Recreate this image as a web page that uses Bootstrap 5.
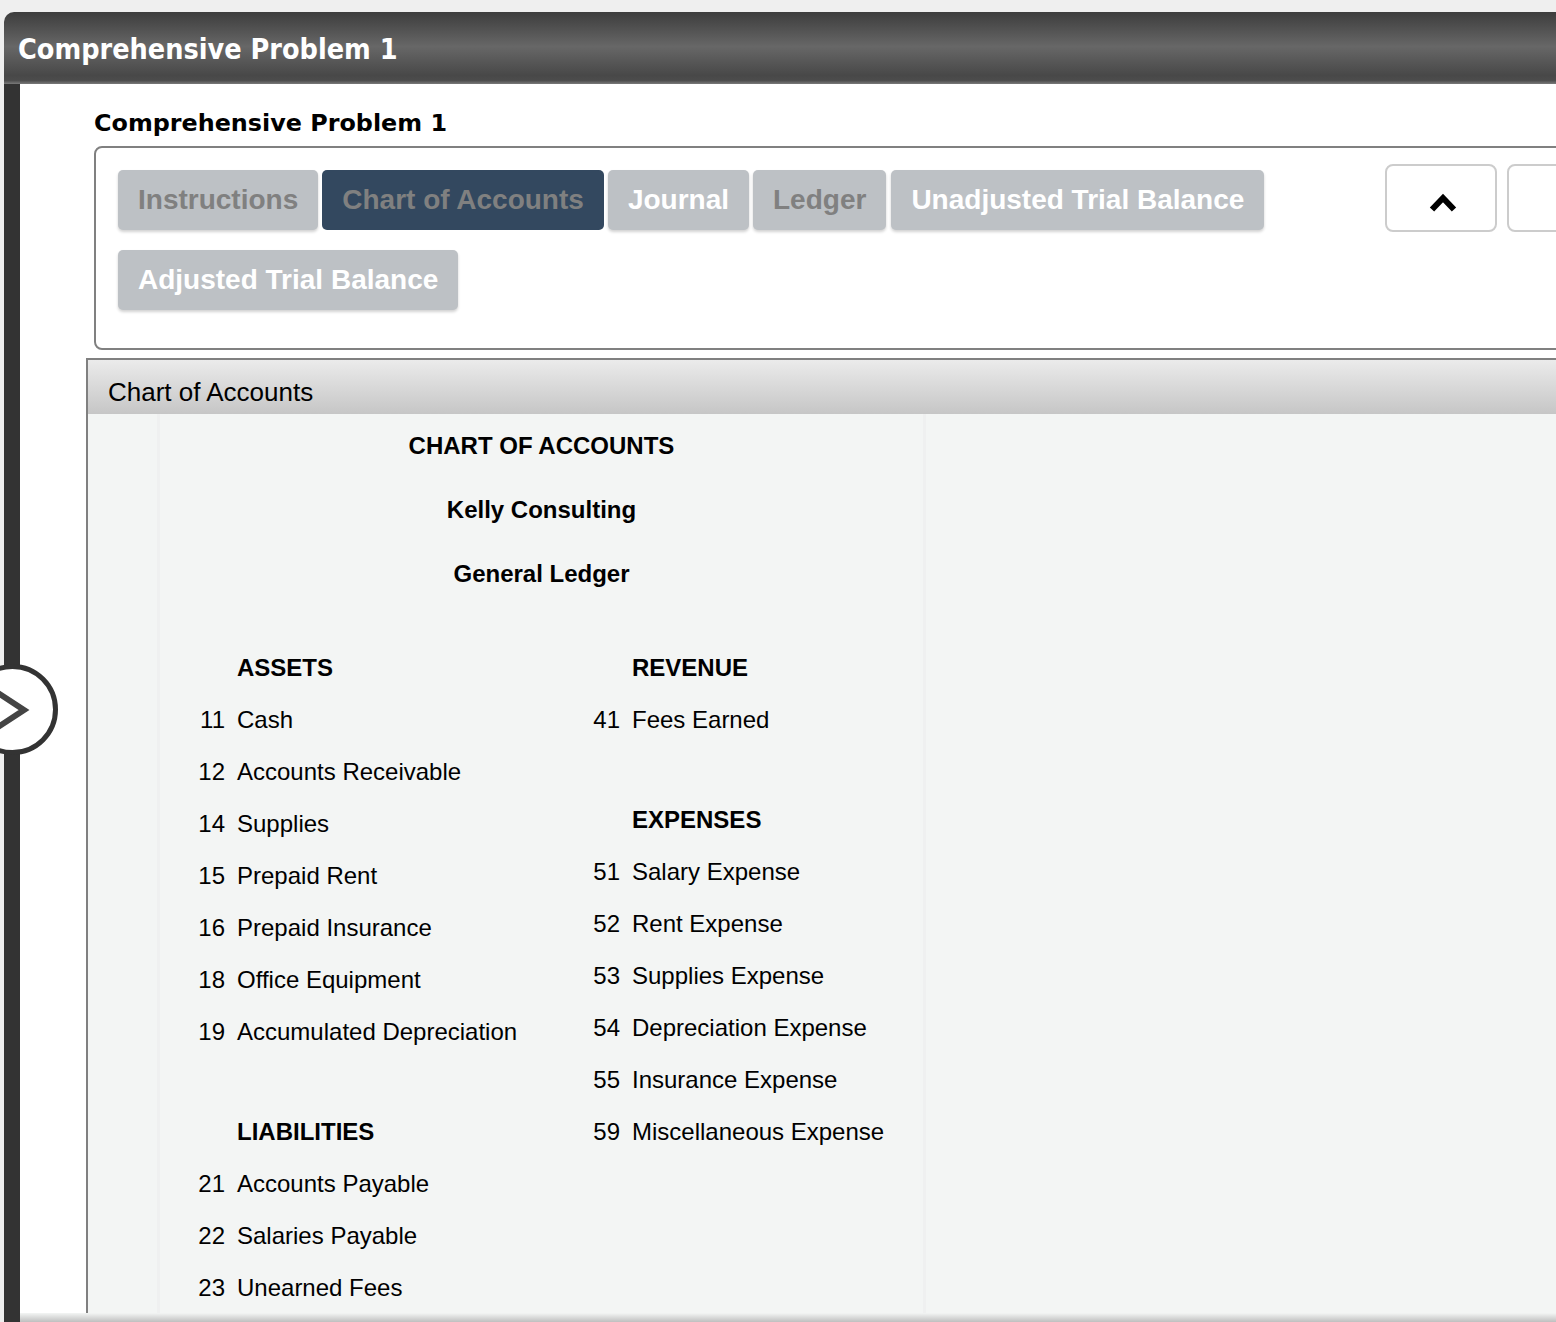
<!DOCTYPE html>
<html lang="en">
<head>
<meta charset="utf-8">
<title>Comprehensive Problem 1</title>
<link href="https://cdn.jsdelivr.net/npm/bootstrap@5.3.0/dist/css/bootstrap.min.css" rel="stylesheet">
<style>
html,body{height:100%}
body{background:#efefef;overflow:hidden;font-family:"Liberation Sans",Arial,sans-serif;color:#000}
.app-win{margin:12px 0 0 4px;width:1720px;height:1310px}
.app-head{height:72px;border-radius:10px 0 0 0;padding:0 14px;background:linear-gradient(#3d3d3d 0,#676767 48%,#484848 88%,#4c4c4c 95%,#7a7a7a 100%);color:#fff;font:700 28.5px/75px "DejaVu Sans Condensed","DejaVu Sans",Verdana,sans-serif}
.app-body{height:1238px}
.app-rail{width:16px;background:#333;flex:none}
.app-main{background:#fff;min-width:0}
.app-scroll{padding:21px 0 0 66px;min-height:0;overflow:hidden}
.prob-title{font:700 23.85px/36px "DejaVu Sans",Verdana,sans-serif;margin:0 0 5px 8px}
.tab-box{margin-left:8px;height:204px;border:2px solid #808080;border-radius:8px;padding:22px 22px 0}
.tab-list{width:1180px;gap:20px 4px}
.tab-btn{height:60px;padding:0 20px;border:0;border-radius:5px;background:#bdc1c5;box-shadow:0 2px 3px rgba(0,0,0,.18);font:700 28px/59px "Liberation Sans",Arial,sans-serif;color:#fff}
.tab-btn.is-off{color:#808080}
.tab-btn.is-on{background:#33485f;box-shadow:none;color:#808080}
.tab-btn.is-nudged{margin-left:1px}
.tool-wrap{position:absolute;left:1289px;top:16px;gap:10px}
.tool-btn{width:112px;height:68px;background:#fff;border:2px solid #ccc;border-radius:8px;padding:8px 0 0 4px}
.sec-box{margin-top:8px;border:solid #808080;border-width:2px 0 0 2px;height:960px}
.sec-head{height:54px;padding:0 20px;background:linear-gradient(#ebebeb,#c6c6c6);font-size:26px;line-height:65px;color:#000}
.sec-body{background:#f3f5f4;flex:1;padding-left:69px;overflow:hidden}
.sheet{width:769px;border:solid #eff0f0;border-width:0 3px;height:100%;font-size:24px;overflow:hidden}
.sheet-title{height:64px;line-height:64px;text-align:center;font-weight:700;margin:0}
.sheet-cols{padding:36px 0 0 35px}
.acct-col{width:395px;flex:none}
.acct-tbl{border-collapse:collapse}
.acct-tbl td{height:52px;padding:0;white-space:nowrap;vertical-align:middle}
.acct-tbl td.num{width:30px;text-align:right;padding-right:12px;box-sizing:content-box}
.acct-tbl tr.hdr td{font-weight:700}
.acct-tbl tr.gap td{height:48px}
.app-foot{height:9px;flex:none;background:linear-gradient(#f3f5f4,#bfbfbf)}
.nav-knob{position:absolute;left:-33px;top:664px;width:91px;height:91px;border:5px solid #333;border-radius:50%;background:#fff}
.nav-knob svg{position:absolute;left:23px;top:21px}
</style>
</head>
<body>
<div class="app-win">
  <div class="app-head">Comprehensive Problem 1</div>
  <div class="app-body d-flex">
    <div class="app-rail"></div>
    <div class="app-main d-flex flex-column flex-grow-1">
      <div class="app-scroll flex-grow-1 position-relative">
        <h1 class="prob-title">Comprehensive Problem 1</h1>
        <div class="tab-box position-relative">
          <div class="tab-list d-flex flex-wrap">
            <div class="tab-btn is-off">Instructions</div>
            <div class="tab-btn is-on">Chart of Accounts</div>
            <div class="tab-btn">Journal</div>
            <div class="tab-btn is-off">Ledger</div>
            <div class="tab-btn is-nudged">Unadjusted Trial Balance</div>
            <div class="tab-btn">Adjusted Trial Balance</div>
          </div>
          <div class="tool-wrap d-flex">
            <button class="tool-btn" aria-label="Collapse"><svg width="28" height="24" viewBox="0 0 28 24"><path d="M3 19.5 14 8l11 11.5" fill="none" stroke="#000" stroke-width="6"/></svg></button>
            <button class="tool-btn" aria-label="Next"></button>
          </div>
        </div>
        <div class="sec-box d-flex flex-column">
          <div class="sec-head">Chart of Accounts</div>
          <div class="sec-body d-flex">
            <div class="sheet">
              <p class="sheet-title">CHART OF ACCOUNTS</p>
              <p class="sheet-title">Kelly Consulting</p>
              <p class="sheet-title">General Ledger</p>
              <div class="sheet-cols d-flex">
                <div class="acct-col">
                  <table class="acct-tbl">
                    <tr class="hdr"><td class="num"></td><td>ASSETS</td></tr>
                    <tr><td class="num">11</td><td>Cash</td></tr>
                    <tr><td class="num">12</td><td>Accounts Receivable</td></tr>
                    <tr><td class="num">14</td><td>Supplies</td></tr>
                    <tr><td class="num">15</td><td>Prepaid Rent</td></tr>
                    <tr><td class="num">16</td><td>Prepaid Insurance</td></tr>
                    <tr><td class="num">18</td><td>Office Equipment</td></tr>
                    <tr><td class="num">19</td><td>Accumulated Depreciation</td></tr>
                    <tr class="gap"><td class="num"></td><td></td></tr>
                    <tr class="hdr"><td class="num"></td><td>LIABILITIES</td></tr>
                    <tr><td class="num">21</td><td>Accounts Payable</td></tr>
                    <tr><td class="num">22</td><td>Salaries Payable</td></tr>
                    <tr><td class="num">23</td><td>Unearned Fees</td></tr>
                  </table>
                </div>
                <div class="acct-col">
                  <table class="acct-tbl">
                    <tr class="hdr"><td class="num"></td><td>REVENUE</td></tr>
                    <tr><td class="num">41</td><td>Fees Earned</td></tr>
                    <tr class="gap"><td class="num"></td><td></td></tr>
                    <tr class="hdr"><td class="num"></td><td>EXPENSES</td></tr>
                    <tr><td class="num">51</td><td>Salary Expense</td></tr>
                    <tr><td class="num">52</td><td>Rent Expense</td></tr>
                    <tr><td class="num">53</td><td>Supplies Expense</td></tr>
                    <tr><td class="num">54</td><td>Depreciation Expense</td></tr>
                    <tr><td class="num">55</td><td>Insurance Expense</td></tr>
                    <tr><td class="num">59</td><td>Miscellaneous Expense</td></tr>
                  </table>
                </div>
              </div>
            </div>
          </div>
        </div>
      </div>
      <div class="app-foot"></div>
    </div>
  </div>
</div>
<div class="nav-knob"><svg width="36" height="42" viewBox="0 0 36 42"><path d="M0 1l29 19L0 39" fill="none" stroke="#444" stroke-width="6"/></svg></div>
<script src="https://cdn.jsdelivr.net/npm/bootstrap@5.3.0/dist/js/bootstrap.bundle.min.js"></script>
</body>
</html>
